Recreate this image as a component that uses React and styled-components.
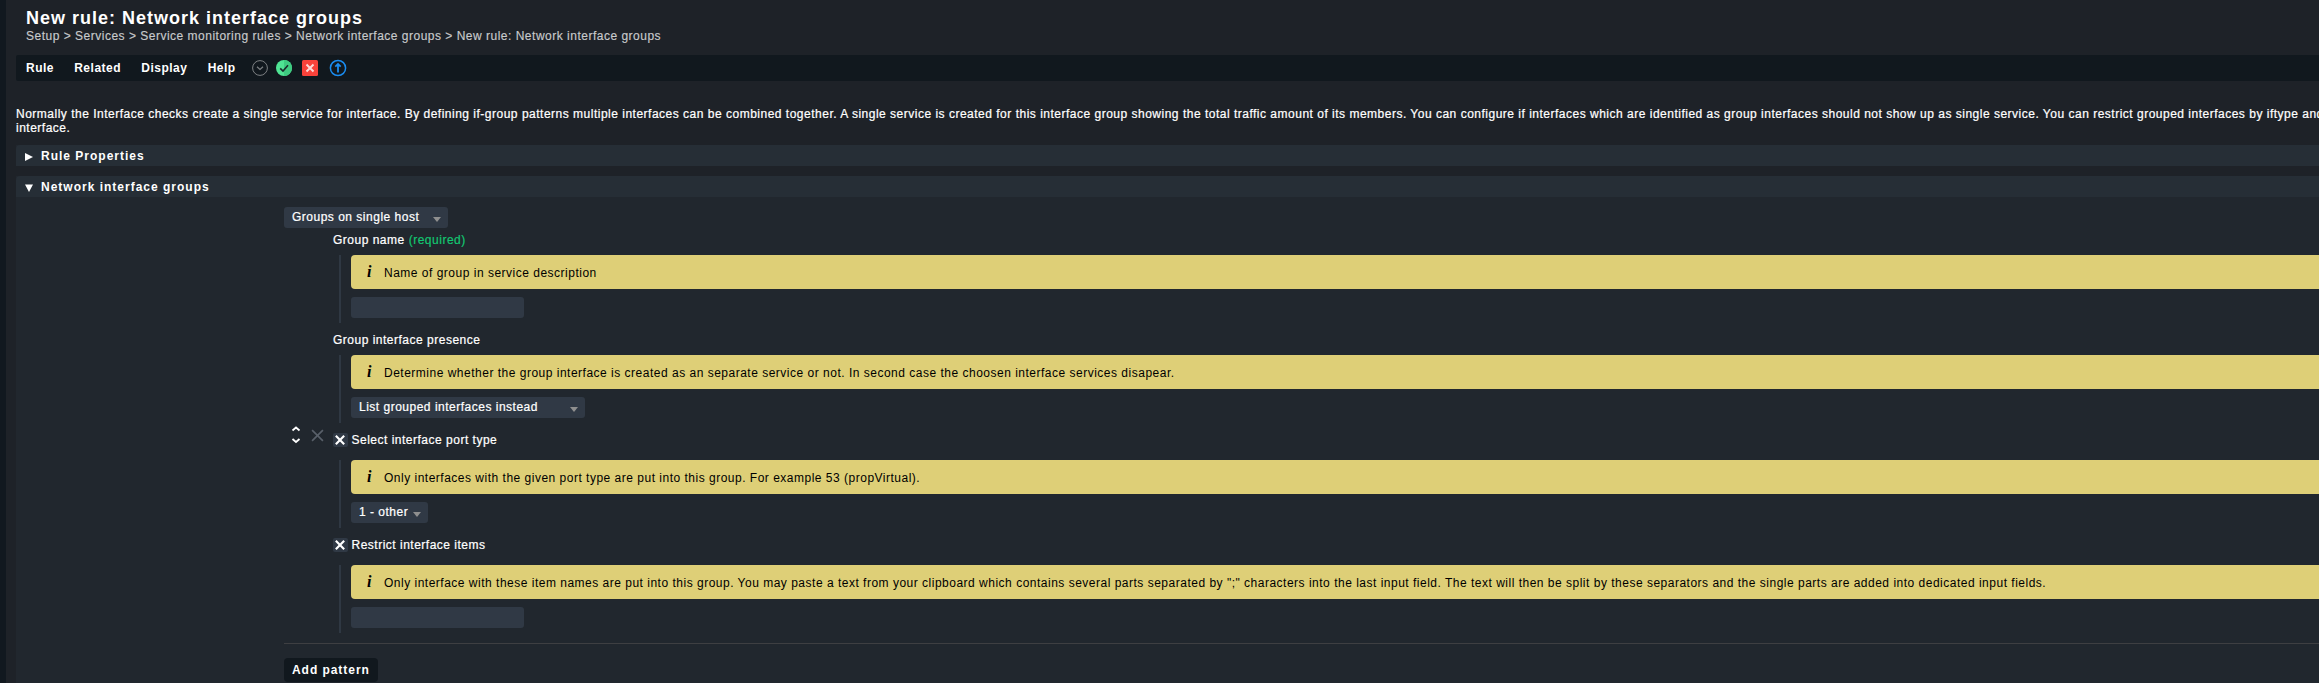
import React from 'react';
import styled, { createGlobalStyle } from 'styled-components';

const GlobalStyle = createGlobalStyle`
  * {
    box-sizing: border-box;
  }

  body {
    margin: 0;
    overflow: hidden;
    background: #1e2228;
    color: #fff;
    font: 12px/14px "Liberation Sans", Arial, sans-serif;
    letter-spacing: 0.5px;
  }
`;

const Page = styled.div`
  display: flex;
  height: 683px;
  overflow: hidden;
`;

const SidebarEdge = styled.div`
  flex: 0 0 6px;
  margin-right: 10px;
  background: #11181f;
`;

const Main = styled.main`
  flex: 1;
  min-width: 0;
  display: flex;
  flex-direction: column;
`;

const Header = styled.header`
  height: 55px;
  padding: 7px 0 0 10px;
`;

const Title = styled.h1`
  margin: 0;
  font-size: 18px;
  line-height: 22px;
  letter-spacing: 1px;
`;

const Breadcrumb = styled.nav`
  color: #c8cacc;
  -webkit-text-stroke: 0.15px #c8cacc;
`;

const MenuBar = styled.div`
  display: flex;
  align-items: center;
  height: 26px;
  padding-left: 10px;
  background: #11181e;
  border-radius: 2px 0 0 2px;
`;

const MenuItem = styled.span`
  margin-right: 20.2px;
  font-weight: bold;
`;

const Shortcuts = styled.div`
  display: flex;
  gap: 8px;
  margin-left: -4px;

  svg {
    display: block;
  }
`;

const Description = styled.p`
  margin: 26px 0 10px;
  white-space: nowrap;
  -webkit-text-stroke: 0.22px #fff;
`;

const Section = styled.section`
  background: #21272e;
  margin-bottom: ${({ $open }) => ($open ? 0 : '10px')};
  flex: ${({ $open }) => ($open ? 1 : 'none')};
`;

const SectionHead = styled.div`
  display: flex;
  align-items: center;
  height: 21px;
  padding-left: 9px;
  gap: 8px;
  background: #262e36;
  border-radius: 4px 0 0 0;
  font-weight: bold;
  letter-spacing: 1px;

  svg {
    margin-top: 3px;
  }
`;

const SectionBody = styled.div`
  padding: 10px 0 0 268px;
`;

const Select = styled.div`
  display: flex;
  justify-content: space-between;
  width: ${({ $width }) => $width}px;
  height: 21px;
  padding: 3px 7px 0 8px;
  background: #303945;
  border-radius: 3px;
  white-space: nowrap;
  -webkit-text-stroke: 0.22px #fff;
`;

const Arrow = styled.span`
  margin-top: 7px;
  width: 8px;
  height: 5px;
  background: #8f8f8f;
  clip-path: polygon(0 0, 100% 0, 50% 100%);
`;

const TextInput = styled.input`
  display: block;
  width: 173px;
  height: 21px;
  border: 0;
  border-radius: 3px;
  background: #303945;
`;

const Pattern = styled.div`
  display: grid;
  grid-template-columns: 49px 1fr;
  border-bottom: 1px solid #3e3f42;
  height: 416px;
`;

const PatternTools = styled.div`
  display: flex;
  align-items: center;
  gap: 10px;
  padding-left: 7px;
  height: 414px;

  svg {
    display: block;
  }
`;

const Label = styled.div`
  display: flex;
  gap: 4px;
  height: ${({ $check }) => ($check ? 37 : 27)}px;
  padding-top: ${({ $check }) => ($check ? 10 : 5)}px;
  -webkit-text-stroke: 0.22px #fff;
`;

const Field = styled.div`
  padding-bottom: ${({ $gap }) => $gap}px;
`;

const Required = styled.span`
  color: #13c671;
  -webkit-text-stroke: 0.2px #13c671;
`;

const Checkbox = styled.span`
  display: grid;
  place-items: center;
  width: 15px;
  height: 14px;
  margin-right: -0.5px;
  padding-right: 1px;
  background: #303945;
  border-radius: 2px;
`;

const Content = styled.div`
  margin-left: 6px;
  padding-left: 10px;
  border-left: 2px solid #2f3843;
  height: 68px;
`;

const HelpBox = styled.div`
  display: flex;
  align-items: center;
  height: 34px;
  margin-bottom: 8px;
  padding: 2px 0 0 16px;
  background: #decf77;
  border-radius: 4px 0 0 4px;
  color: #000;
  white-space: nowrap;
`;

const InfoIcon = styled.span`
  width: 17px;
  margin-top: -2px;
  font: italic bold 16px/16px "Liberation Serif", "Times New Roman", serif;
  letter-spacing: 0;
`;

const AddButton = styled.button`
  display: block;
  width: 94px;
  height: 24px;
  margin-top: 14px;
  padding: 0 0 1px 8px;
  border: 0;
  border-radius: 4px;
  background: #11181e;
  color: #fff;
  font: bold 12px/14px "Liberation Sans", Arial, sans-serif;
  letter-spacing: 0.95px;
  text-align: left;
`;

const Cross = ({ size, color, width }) => (
  <svg width={size} height={size} viewBox="0 0 12 12" fill="none" stroke={color} strokeWidth={width}>
    <path d="M1 1L11 11M11 1L1 11" />
  </svg>
);

const Help = ({ children }) => (
  <HelpBox>
    <InfoIcon>i</InfoIcon>
    {children}
  </HelpBox>
);

const Dropdown = ({ width, children }) => (
  <Select $width={width}>
    {children}
    <Arrow />
  </Select>
);

const CheckLabel = ({ children }) => (
  <Label $check>
    <Checkbox>
      <Cross size={10} color="#fff" width={2.6} />
    </Checkbox>
    {children}
  </Label>
);

const MenuIcons = () => (
  <Shortcuts>
    <svg width="16" height="16" fill="none" stroke="#7d8083">
      <circle cx="8" cy="8" r="7.4" />
      <path d="M5 6.7L8 9.5L11 6.7" strokeWidth="1.2" />
    </svg>
    <svg width="16" height="16" fill="none">
      <circle cx="8" cy="8" r="8" fill="#4fe494" />
      <path d="M8 0a8 8 0 0 1 0 16z" fill="#3fcb81" />
      <path d="M4.2 8.3L7 11L12 5.3" stroke="#1b2a2c" strokeWidth="1.6" />
    </svg>
    <svg width="20" height="16" fill="none">
      <rect x="2" width="16" height="16" rx="1.5" fill="#f9423a" />
      <path d="M6.5 4.5L13.5 11.5M13.5 4.5L6.5 11.5" stroke="#fdd9d7" strokeWidth="2" />
    </svg>
    <svg width="20" height="16" fill="none" stroke="#1a8cf0" overflow="visible">
      <circle cx="10" cy="8" r="7.6" strokeWidth="1.5" />
      <path d="M10 12.5V4M7.3 6.6L10 3.9L12.7 6.6" strokeWidth="1.8" />
    </svg>
  </Shortcuts>
);

const App = () => (
  <>
    <GlobalStyle />
    <Page>
      <SidebarEdge />
      <Main>
        <Header>
          <Title>New rule: Network interface groups</Title>
          <Breadcrumb>
            Setup &gt; Services &gt; Service monitoring rules &gt; Network interface groups &gt; New rule: Network interface groups
          </Breadcrumb>
        </Header>
        <MenuBar>
          {['Rule', 'Related', 'Display', 'Help'].map((item) => (
            <MenuItem key={item}>{item}</MenuItem>
          ))}
          <MenuIcons />
        </MenuBar>
        <Description>
          Normally the Interface checks create a single service for interface. By defining if-group patterns multiple
          interfaces can be combined together. A single service is created for this interface group showing the total
          traffic amount of its members. You can configure if interfaces which are identified as group interfaces should
          not show up as single service. You can restrict grouped interfaces by iftype and
          <br />
          interface.
        </Description>
        <Section>
          <SectionHead>
            <svg width="8" height="8" fill="#fff">
              <path d="M0 0L8 4L0 8z" />
            </svg>
            Rule Properties
          </SectionHead>
        </Section>
        <Section $open>
          <SectionHead>
            <svg width="8" height="8" fill="#fff">
              <path d="M0 0.5H8L4 8z" />
            </svg>
            Network interface groups
          </SectionHead>
          <SectionBody>
            <Dropdown width={164}>Groups on single host</Dropdown>
            <Pattern>
              <PatternTools>
                <svg width="10" height="18" fill="none" stroke="#fff" strokeWidth="1.8">
                  <path d="M1.5 4.5L5 1.5L8.5 4.5M1.5 13L5 16L8.5 13" />
                </svg>
                <Cross size={13} color="#59606a" width={1.5} />
              </PatternTools>
              <div>
                <Field $gap={5}>
                  <Label>
                    Group name <Required>(required)</Required>
                  </Label>
                  <Content>
                    <Help>Name of group in service description</Help>
                    <TextInput />
                  </Content>
                </Field>
                <Field $gap={0}>
                  <Label>Group interface presence</Label>
                  <Content>
                    <Help>
                      Determine whether the group interface is created as an separate service or not. In second case the
                      choosen interface services disapear.
                    </Help>
                    <Dropdown width={234}>List grouped interfaces instead</Dropdown>
                  </Content>
                </Field>
                <Field $gap={0}>
                  <CheckLabel>Select interface port type</CheckLabel>
                  <Content>
                    <Help>
                      Only interfaces with the given port type are put into this group. For example 53 (propVirtual).
                    </Help>
                    <Dropdown width={77}>1 - other</Dropdown>
                  </Content>
                </Field>
                <Field $gap={0}>
                  <CheckLabel>Restrict interface items</CheckLabel>
                  <Content>
                    <Help>
                      Only interface with these item names are put into this group. You may paste a text from your
                      clipboard which contains several parts separated by ";" characters into the last input field. The
                      text will then be split by these separators and the single parts are added into dedicated input
                      fields.
                    </Help>
                    <TextInput />
                  </Content>
                </Field>
              </div>
            </Pattern>
            <AddButton>Add pattern</AddButton>
          </SectionBody>
        </Section>
      </Main>
    </Page>
  </>
);

export default App;
